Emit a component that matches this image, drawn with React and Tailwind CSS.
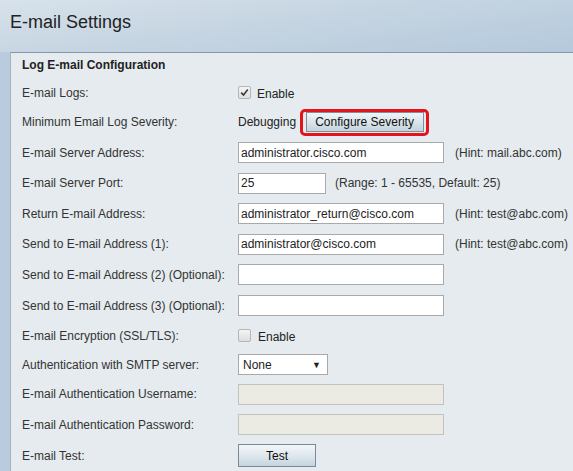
import React from "react";

function Row({ h, label, children }) {
  return (
    <div className={`flex items-center ${h}`}>
      <div className="w-[216px] shrink-0 text-[#333]">{label}</div>
      <div className="flex items-center">{children}</div>
    </div>
  );
}

function TextInput({ value = "", w = "w-[206px]", disabled = false }) {
  return (
    <div
      className={`${w} h-[21px] border flex items-center pl-[2px] ${
        disabled ? "bg-[#ebebe4] border-[#c2c2c0]" : "bg-white border-[#a9a9a9]"
      } text-[#222]`}
    >
      {value}
    </div>
  );
}

function Check({ checked }) {
  return (
    <div className="w-[13px] h-[13px] rounded-[2px] border border-[#b5b5b5] bg-[linear-gradient(180deg,#f4f4f4,#dedede)] flex items-center justify-center">
      {checked && (
        <svg width="9" height="9" viewBox="0 0 9 9">
          <path d="M1.2 4.6 L3.5 7 L7.8 1.6" fill="none" stroke="#3a3a3a" strokeWidth="1.6" />
        </svg>
      )}
    </div>
  );
}

export default function App() {
  return (
    <div
      className="w-[573px] h-[471px] overflow-hidden bg-[#b9cbdc] text-[12px] leading-[14px] flex flex-col"
      style={{ fontFamily: '"Liberation Sans", Arial, sans-serif' }}
    >
      <div className="h-[52px] shrink-0 bg-[linear-gradient(172deg,#d7e2eb_0%,#c6d5e2_45%,#b4c9dc_100%)] pl-[10px] pt-[12px]">
        <div className="text-[18px] leading-[20px] text-[#222]">E-mail Settings</div>
      </div>
      <div className="flex-1 flex pl-[10px]">
        <div className="flex-1 bg-[#e5ebee] border-t border-l border-t-[#8797a3] border-l-[#a8b2ba] pl-[11px] flex flex-col">
          <div className="h-[25px] pt-[5px] font-bold text-[#222]">Log E-mail Configuration</div>
          <Row h="h-[29px]" label="E-mail Logs:">
            <Check checked />
            <span className="ml-[6px] mt-[2px] text-[#222]">Enable</span>
          </Row>
          <Row h="h-[30px]" label="Minimum Email Log Severity:">
            <span className="text-[#222]">Debugging</span>
            <div className="ml-[4px] w-[129px] h-[27px] border-[3px] border-[#e3141c] rounded-[5px] flex items-center justify-center">
              <div className="w-[118px] h-[20px] border border-[#7f8e98] bg-[linear-gradient(180deg,#f0f4f7_0%,#dbe5eb_50%,#c3d3dd_100%)] flex items-center justify-center text-[#111]">
                Configure Severity
              </div>
            </div>
          </Row>
          <Row h="h-[31px]" label="E-mail Server Address:">
            <TextInput value="administrator.cisco.com" />
            <span className="ml-[11px] text-[#333]">(Hint: mail.abc.com)</span>
          </Row>
          <Row h="h-[30px]" label="E-mail Server Port:">
            <TextInput value="25" w="w-[88px]" />
            <span className="ml-[9px] text-[#333]">(Range: 1 - 65535, Default: 25)</span>
          </Row>
          <Row h="h-[31px]" label="Return E-mail Address:">
            <TextInput value="administrator_return@cisco.com" />
            <span className="ml-[11px] text-[#333]">(Hint: test@abc.com)</span>
          </Row>
          <Row h="h-[30px]" label="Send to E-mail Address (1):">
            <TextInput value="administrator@cisco.com" />
            <span className="ml-[11px] text-[#333]">(Hint: test@abc.com)</span>
          </Row>
          <Row h="h-[31px]" label="Send to E-mail Address (2) (Optional):">
            <TextInput />
          </Row>
          <Row h="h-[31px]" label="Send to E-mail Address (3) (Optional):">
            <TextInput />
          </Row>
          <Row h="h-[29px]" label="E-mail Encryption (SSL/TLS):">
            <Check />
            <span className="ml-[7px] mt-[2px] text-[#222]">Enable</span>
          </Row>
          <Row h="h-[29px]" label="Authentication with SMTP server:">
            <div className="w-[90px] h-[21px] bg-white border border-[#a9a9a9] flex items-center justify-between pl-[4px] pr-[6px] text-[#222]">
              <span>None</span>
              <span className="text-[9px]">▼</span>
            </div>
          </Row>
          <Row h="h-[30px]" label="E-mail Authentication Username:">
            <TextInput disabled />
          </Row>
          <Row h="h-[31px]" label="E-mail Authentication Password:">
            <TextInput disabled />
          </Row>
          <Row h="h-[31px]" label="E-mail Test:">
            <div className="w-[78px] h-[23px] border border-[#7b8a95] bg-[linear-gradient(180deg,#f2f6f8_0%,#dfe8ee_50%,#c4d4de_100%)] flex items-center justify-center text-[#111]">
              Test
            </div>
          </Row>
        </div>
      </div>
    </div>
  );
}
